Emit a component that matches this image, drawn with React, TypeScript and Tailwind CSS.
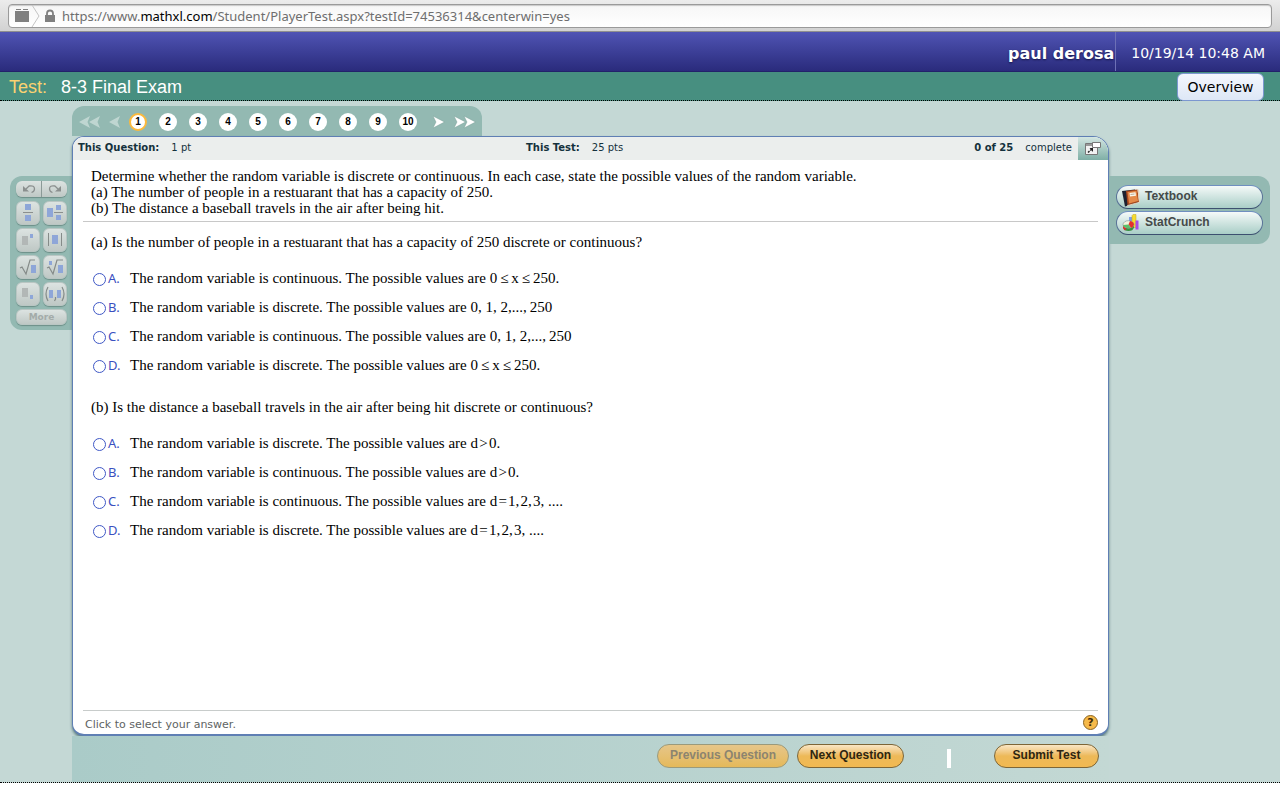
import type { ReactNode } from 'react';

const VERDANA = "font-['DejaVu_Sans',sans-serif]";
const TOOL_BUTTON =
  'flex items-center justify-center rounded-md border border-[#b9c6c3] bg-linear-to-b from-[#dce3e1] to-[#bfc8c5] shadow-[0_1px_1px_#6d8f88]';

type Choice = { letter: string; text: string };

const partA: Choice[] = [
  { letter: 'A', text: 'The random variable is continuous. The possible values are 0\u2009≤\u2009x\u2009≤\u2009250.' },
  { letter: 'B', text: 'The random variable is discrete. The possible values are 0, 1, 2,...,\u2009250' },
  { letter: 'C', text: 'The random variable is continuous. The possible values are 0, 1, 2,...,\u2009250' },
  { letter: 'D', text: 'The random variable is discrete. The possible values are 0\u2009≤\u2009x\u2009≤\u2009250.' },
];

const partB: Choice[] = [
  { letter: 'A', text: 'The random variable is discrete. The possible values are d\u200A>\u200A0.' },
  { letter: 'B', text: 'The random variable is continuous. The possible values are d\u200A>\u200A0.' },
  { letter: 'C', text: 'The random variable is continuous. The possible values are d\u200A=\u200A1,\u200A2,\u200A3, ....' },
  { letter: 'D', text: 'The random variable is discrete. The possible values are d\u200A=\u200A1,\u200A2,\u200A3, ....' },
];

function AddressBar() {
  return (
    <div className="flex h-8 items-center border-b border-[#8f8f8f] bg-linear-to-b from-[#ececec] to-[#d2d2d2] px-2">
      <div className="flex h-6 flex-1 items-center rounded-sm border border-[#9a9a9a] bg-linear-to-b from-[#f6f6f6] to-white shadow-[inset_0_1px_1px_#c9c9c9]">
        <svg className="ml-1" width="44" height="22" viewBox="0 0 44 22" aria-hidden="true">
          <path d="M2 6h14v11H2z" fill="#808080" />
          <path d="M3 4h5v1H3zM10 4h5v1h-5z" fill="#808080" />
          <path d="M19 0l7 11-7 11" fill="none" stroke="#c4c4c4" />
          <path d="M32 10h10v7H32z" fill="#808080" />
          <path d="M34 11V8.500a3 3 0 0 1 6 0V11" fill="none" stroke="#808080" strokeWidth="1.800" />
        </svg>
        <div className="relative ml-[5px] flex-1 font-['Noto_Sans',sans-serif] text-[13px] leading-4 text-[#6e6e6e]">
          <span aria-hidden="true">
            https://www.<span className="text-black">mathxl.com</span>
            /Student/PlayerTest.aspx?testId=74536314&amp;centerwin=yes
          </span>
          <input
            type="text"
            aria-label="Address"
            className="absolute inset-0 bg-transparent text-transparent caret-black outline-none"
            defaultValue="https://www.mathxl.com/Student/PlayerTest.aspx?testId=74536314&centerwin=yes"
          />
        </div>
      </div>
    </div>
  );
}

function ArrowLeft({ double = false }: { double?: boolean }) {
  return (
    <svg width={double ? 22 : 12} height="14" viewBox={double ? '0 0 22 14' : '0 0 12 14'}>
      <path d="M0 7L11 1L8.500 7L11 13Z" fill="#bfd6d1" />
      {double && <path d="M10 7L21 1L18.500 7L21 13Z" fill="#bfd6d1" />}
    </svg>
  );
}

function ArrowRight({ double = false }: { double?: boolean }) {
  return (
    <svg width={double ? 22 : 12} height="16" viewBox={double ? '0 0 22 16' : '0 0 12 16'}>
      <path d="M0 2L11.500 8L0 14L3 8Z" fill="#fff" stroke="#6f9890" strokeWidth=".4" />
      {double && <path d="M10 2L21.500 8L10 14L13 8Z" fill="#fff" stroke="#6f9890" strokeWidth=".4" />}
    </svg>
  );
}

function QuestionNav() {
  return (
    <nav
      aria-label="Questions"
      className="flex h-[30px] w-[410px] items-center rounded-t-xl bg-[#93b9b2] pt-[2px] pl-[7px] font-['Liberation_Sans',sans-serif]"
    >
      <button aria-label="First" disabled className="w-[30px]"><ArrowLeft double /></button>
      <button aria-label="Previous" disabled className="w-[20px]"><ArrowLeft /></button>
      <div className="flex gap-3">
        {[1, 2, 3, 4, 5, 6, 7, 8, 9, 10].map((n) => (
          <button
            key={n}
            className={
              n === 1
                ? 'size-[18px] rounded-full border-2 border-[#fcb93c] bg-white text-[10px] leading-[14px] font-bold text-black'
                : 'size-[18px] rounded-full bg-white text-[10px] leading-[18px] font-bold text-black'
            }
          >
            {n}
          </button>
        ))}
      </div>
      <button aria-label="Next" className="ml-4 w-[21px]"><ArrowRight /></button>
      <button aria-label="Last"><ArrowRight double /></button>
    </nav>
  );
}

function Glyph({ children }: { children: ReactNode }) {
  return (
    <svg width="22" height="22" viewBox="0 0 22 22" fill="none" aria-hidden="true">
      {children}
    </svg>
  );
}

const tools: { name: string; glyph: ReactNode }[] = [
  {
    name: 'Fraction',
    glyph: (
      <>
        <path d="M8 2h6v6H8zM8 13h6v6H8z" fill="#8ea6d8" />
        <path d="M6 10.500h10" stroke="#8b8f8e" />
      </>
    ),
  },
  {
    name: 'Mixed number',
    glyph: (
      <>
        <path d="M3 6h6v9H3zM12 3h5v5h-5zM12 13h5v5h-5z" fill="#8ea6d8" />
        <path d="M10 10.500h9" stroke="#8b8f8e" />
      </>
    ),
  },
  {
    name: 'Exponent',
    glyph: (
      <>
        <path d="M5 7h6v9H5z" fill="#b2b7b6" />
        <path d="M13 5h3v4h-3z" fill="#8ea6d8" />
      </>
    ),
  },
  {
    name: 'Absolute value',
    glyph: (
      <>
        <path d="M8 6h6v9H8z" fill="#8ea6d8" />
        <path d="M4.500 4v13M17.500 4v13" stroke="#858b89" />
      </>
    ),
  },
  {
    name: 'Square root',
    glyph: (
      <>
        <path d="M14 9h5v8h-5z" fill="#8ea6d8" />
        <path d="M3 12l2-1 4 7 4-14h5" stroke="#858b89" strokeWidth="1.200" />
      </>
    ),
  },
  {
    name: 'Nth root',
    glyph: (
      <>
        <path d="M14 9h5v8h-5zM5 5h3v4H5z" fill="#8ea6d8" />
        <path d="M3 12l2-1 4 7 4-14h6" stroke="#858b89" strokeWidth="1.200" />
      </>
    ),
  },
  {
    name: 'Subscript',
    glyph: (
      <>
        <path d="M5 5h6v9H5z" fill="#b2b7b6" />
        <path d="M13 12h3v4h-3z" fill="#8ea6d8" />
      </>
    ),
  },
  {
    name: 'Ordered pair',
    glyph: (
      <>
        <path d="M5 7h4v8H5zM13 7h4v8h-4z" fill="#8ea6d8" />
        <path d="M4 4q-4 7 0 14M18 4q4 7 0 14M11.500 14v2l-1 2" stroke="#858b89" strokeWidth="1.200" />
      </>
    ),
  },
];

function ToolPalette() {
  return (
    <aside className="mt-[75px] ml-[10px] w-[62px] rounded-l-xl bg-[#93b9b2] py-[5px] pr-[5px] pl-[6px]">
      <div className="flex rounded-md shadow-[0_1px_1px_#6d8f88]">
        <button aria-label="Undo" className="flex h-4 flex-1 items-center justify-center rounded-l-md border-r border-[#8b9a97] bg-linear-to-b from-[#dce3e1] to-[#bfc8c5]">
          <svg width="14" height="10" viewBox="0 0 14 10" fill="none" stroke="#8a8f8e" strokeWidth="1.300">
            <path d="M4 5L7 2Q12.500 1 12.500 5Q12.500 7.500 9.500 8.500" />
            <path d="M1 2v5.500h6z" fill="#8a8f8e" stroke="none" />
          </svg>
        </button>
        <button aria-label="Redo" className="flex h-4 flex-1 items-center justify-center rounded-r-md bg-linear-to-b from-[#dce3e1] to-[#bfc8c5]">
          <svg width="14" height="10" viewBox="0 0 14 10" fill="none" stroke="#8a8f8e" strokeWidth="1.300">
            <path d="M10 5L7 2Q1.500 1 1.500 5Q1.500 7.500 4.500 8.500" />
            <path d="M13 2v5.500h-6z" fill="#8a8f8e" stroke="none" />
          </svg>
        </button>
      </div>
      <div className="mt-1 grid grid-cols-2 gap-[3px]">
        {tools.map((t) => (
          <button key={t.name} aria-label={t.name} className={`h-6 ${TOOL_BUTTON}`}>
            <Glyph>{t.glyph}</Glyph>
          </button>
        ))}
      </div>
      <button
        className={`mt-[3px] h-4 w-full pb-px ${TOOL_BUTTON} ${VERDANA} text-[9px] leading-3 font-bold text-[#a3aba9]`}
      >
        More
      </button>
    </aside>
  );
}

function ChoiceGroup({ name, choices }: { name: string; choices: Choice[] }) {
  return (
    <div role="radiogroup" aria-label={name}>
      {choices.map((c) => (
        <label key={c.letter} className="flex h-[29px] items-center">
          <input
            type="radio"
            name={name}
            className="mx-[2px] size-[13px] appearance-none rounded-full border border-[#3f58c6] bg-white checked:bg-[#3f58c6]"
          />
          <span className="w-[22px] pb-[3px] font-['Noto_Sans',sans-serif] text-[13px] leading-4 text-[#3a50c0]">{c.letter}.</span>
          <span className="pb-[3px]">{c.text}</span>
        </label>
      ))}
    </div>
  );
}

function QuestionPanel() {
  return (
    <section className="flex flex-1 flex-col overflow-hidden rounded-xl rounded-tr-2xl border border-b-2 border-[#5f7fb4] bg-white shadow-[0_2px_3px_#5d7f80]">
      <header className={`grid h-[23px] grid-cols-[87fr_113fr] items-center bg-[#ebeeed] pl-[5px] text-[10px] leading-4 text-[#14313c] ${VERDANA}`}>
        <div className="flex gap-3 pb-[2px]"><b>This Question:</b><span>1 pt</span></div>
        <div className="flex items-center justify-between">
          <div className="flex gap-3 pb-[2px]"><b>This Test:</b><span>25 pts</span></div>
          <div className="flex items-center gap-[6px]">
            <div className="flex gap-3 pb-[2px]"><b>0 of 25</b><span>complete</span></div>
            <button aria-label="Pop out" className="flex h-[23px] w-[30px] items-center justify-center bg-linear-to-b from-[#d3e6e2] to-[#7fafa6]">
              <svg width="18" height="15" viewBox="0 0 18 15">
                <path d="M1.500 2.500h12v11h-12z" fill="#f2f2f2" stroke="#777" />
                <path d="M2 3h11v2H2z" fill="#999" />
                <path d="M4 11.500L8 8" stroke="#222" strokeWidth="1.500" strokeDasharray="2 1" />
                <path d="M9 7v4L5.500 7z" fill="#222" />
                <path d="M8.500 1.500h8v5h-8z" fill="#fff" stroke="#777" />
              </svg>
            </button>
          </div>
        </div>
      </header>
      <div className="flex flex-1 flex-col px-[10px] font-['Liberation_Serif',serif] text-[15px] leading-4 text-black">
        <div className="border-b border-[#c8c8c8] px-2 pt-2 pb-[5px]">
          <p>Determine whether the random variable is discrete or continuous. In each case, state the possible values of the random variable.</p>
          <p>(a) The number of people in a restuarant that has a capacity of 250.</p>
          <p>(b) The distance a baseball travels in the air after being hit.</p>
        </div>
        <div className="px-2 pt-3">
          <p>(a) Is the number of people in a restuarant that has a capacity of 250 discrete or continuous?</p>
          <div className="pt-[15px] pb-[18px]"><ChoiceGroup name="Part a" choices={partA} /></div>
          <p>(b) Is the distance a baseball travels in the air after being hit discrete or continuous?</p>
          <div className="pt-[15px]"><ChoiceGroup name="Part b" choices={partB} /></div>
        </div>
        <div className="mt-auto flex h-6 items-center justify-between border-t border-[#c8cccb] pl-[2px]">
          <span className={`pt-[5px] text-[11px] text-[#5e6363] ${VERDANA}`}>Click to select your answer.</span>
          <button
            aria-label="Help"
            className={`size-[15px] rounded-full border border-[#8a6420] bg-[#f6b949] text-[11px] leading-[13px] font-bold text-[#3d2a08] ${VERDANA}`}
          >
            ?
          </button>
        </div>
      </div>
    </section>
  );
}

const GOLD =
  "h-6 rounded-full border border-[#7d6638] bg-linear-to-b from-[#f9e6c4] via-[#edb958] to-[#f2b951] pb-[2px] font-['Liberation_Sans',sans-serif] text-[12px] leading-4 font-bold text-[#2e2611]";

function FooterButtons() {
  return (
    <div className="flex h-[46px] items-start justify-end bg-linear-to-r from-[#aacbc8] to-[#c3d8d4] pt-2 pr-[10px]">
      <button
        disabled
        className="mr-2 h-6 w-[132px] rounded-full border border-[#9b9a7b] bg-linear-to-b from-[#e6c689] to-[#e5b959] pb-[2px] font-['Liberation_Sans',sans-serif] text-[12px] leading-4 font-bold text-[#8c846f]"
      >
        Previous Question
      </button>
      <button className={`w-[107px] ${GOLD}`}>Next Question</button>
      <div className="mx-[43px] mt-[5px] h-[19px] w-1 bg-white" />
      <button className={`w-[105px] ${GOLD}`}>Submit Test</button>
    </div>
  );
}

const RESOURCE =
  "flex h-6 w-full items-center gap-1 rounded-full border border-t-[#6f8fc0] border-x-[#5a7398] border-b-[#3d5070] bg-linear-to-b from-[#f5faf9] to-[#a9cec7] pl-[5px] font-['Liberation_Sans',sans-serif] text-[12px] leading-4 font-bold text-[#454a49]";

function Resources() {
  return (
    <aside className="mt-[75px] mr-[10px] flex h-[68px] w-[161px] flex-col gap-[2px] rounded-r-xl bg-[#93b9b2] px-[7px] pt-[9px]">
      <button className={RESOURCE}>
        <svg width="19" height="20" viewBox="0 0 19 20" aria-hidden="true">
          <path d="M0 4L13 2.500l3 13L3 19.500z" fill="#1d2231" />
          <path d="M4 4L15.500 2.500L17 15L5.500 18z" fill="#a8481c" />
          <path d="M5.500 5L14.500 3.800L16 14L7 16.500z" fill="#e58a4a" />
          <path d="M7.500 6l6-.8.5 3.600-6 .8z" fill="#faf6ea" />
          <path d="M8.500 7.500l4-.5" stroke="#a98" strokeWidth=".8" />
          <path d="M15.500 2.500L17 2.800L18 15.500L5 19.300L5.500 18L17 15z" fill="#e9d3bd" />
        </svg>
        <span className="pb-[2px]">Textbook</span>
      </button>
      <button className={RESOURCE}>
        <svg width="19" height="18" viewBox="0 0 19 18" aria-hidden="true">
          <path d="M7 3h3.500v8H7z" fill="#7f9fe4" />
          <path d="M10 1.500l1-1h3v13h-4z" fill="#f5dc2e" stroke="#c0a31d" strokeWidth=".5" />
          <path d="M13.500 6.500h3v9h-3z" fill="#a84be6" />
          <path d="M1 10.500v3q1 3.500 5.500 3.500t5.500-3.500v-3z" fill="#3a8f42" />
          <path d="M1 10.500v3q.5 2 2 3l3.500-5z" fill="#d92f2b" />
          <ellipse cx="6.500" cy="10.500" rx="5.500" ry="3.800" fill="#f2f4dc" stroke="#6c7f8a" strokeWidth=".5" />
          <path d="M6.500 10.500L8 6.900Q12 7.700 12 10.500Q11.500 13 9 14z" fill="#e4302c" />
          <path d="M6.500 10.500L1 11Q2 14 6.500 14.300L9 14z" fill="#5bc06a" />
        </svg>
        <span className="pb-[2px]">StatCrunch</span>
      </button>
    </aside>
  );
}

export default function App() {
  return (
    <div className="flex min-h-screen flex-col bg-white">
      <AddressBar />
      <div className={`flex h-10 items-stretch justify-end border-b border-[#22226a] bg-linear-to-b from-[#5054b4] to-[#2a2b7c] text-white ${VERDANA}`}>
        <div className="flex items-center border-r border-[#6d70b6] pt-1 pr-px text-[16px] font-bold [text-shadow:0_1px_2px_#15154a]">paul derosa</div>
        <div className="flex items-center px-[15px] pt-1 text-[14px]">10/19/14 10:48 AM</div>
      </div>
      <div className="flex h-[29px] items-center justify-between border-b border-dotted border-black bg-[#478f80] pt-px pr-4 pl-[9px] font-['Liberation_Sans',sans-serif] text-[18px]">
        <h1 className="flex gap-[14px] pt-px">
          <span className="text-[#fbd271]">Test:</span>
          <span className="text-white">8-3 Final Exam</span>
        </h1>
        <button className={`h-7 w-[87px] rounded-md border border-[#7c97d0] bg-linear-to-b from-[#f4f7fd] to-[#dde7f6] pt-px text-[14px] text-black ${VERDANA}`}>
          Overview
        </button>
      </div>
      <main className="flex flex-1 items-start border-b border-dotted border-black bg-[#c4d8d5]">
        <ToolPalette />
        <div className="flex min-w-0 flex-1 flex-col self-stretch pt-[5px]">
          <QuestionNav />
          <QuestionPanel />
          <FooterButtons />
        </div>
        <Resources />
      </main>
      <div className="h-[17px]" />
    </div>
  );
}
